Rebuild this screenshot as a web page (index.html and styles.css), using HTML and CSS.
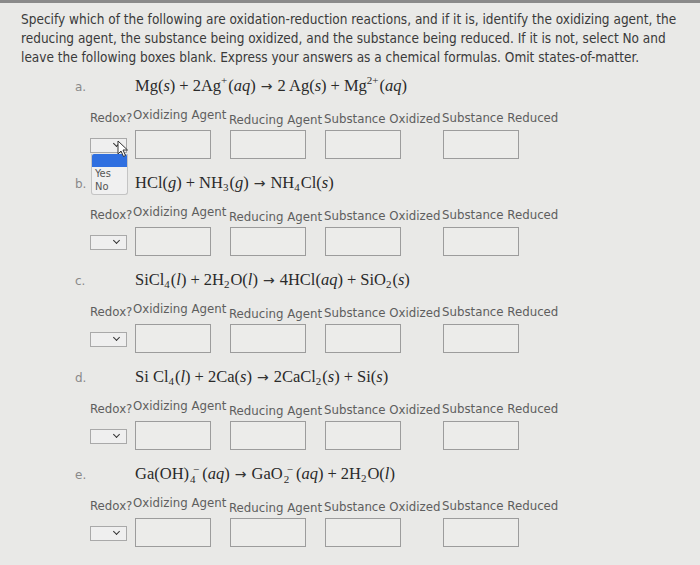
FILE: index.html
```html
<!DOCTYPE html>
<html>
<head>
<meta charset="utf-8">
<link rel="stylesheet" href="styles.css">
</head>
<body>
<div class="page">
  <p class="intro">Specify which of the following are oxidation-reduction reactions, and if it is, identify the oxidizing agent, the reducing agent, the substance being oxidized, and the substance being reduced. If it is not, select No and leave the following boxes blank. Express your answers as a chemical formulas. Omit states-of-matter.</p>

  <section class="item">
    <div class="eqrow"><span class="letter">a.</span><span class="eq">Mg(<i>s</i>)<span class="op">+</span>2Ag<sup>+</sup>(<i>aq</i>)<span class="op arr">→</span>2 Ag(<i>s</i>)<span class="op">+</span>Mg<sup>2+</sup>(<i>aq</i>)</span></div>
    <div class="grid">
      <span class="lab">Redox?</span><span class="lab up">Oxidizing Agent</span><span class="lab down">Reducing Agent</span><span class="lab sub1">Substance Oxidized</span><span class="lab">Substance Reduced</span>
      <div class="selwrap">
        <div class="sel"><span class="chev"></span></div>
        <div class="menu"><div class="hl"></div><div class="opt">Yes</div><div class="opt">No</div></div>
        <svg class="cursor" width="12" height="18" viewBox="0 0 12 18"><path d="M1 1 L1 14 L4 11 L6.5 16.5 L8.5 15.5 L6 10 L10.5 10 Z" fill="#fff" stroke="#333" stroke-width="1"/></svg>
      </div>
      <div class="box b1"></div><div class="box"></div><div class="box"></div><div class="box"></div>
    </div>
  </section>

  <section class="item">
    <div class="eqrow"><span class="letter">b.</span><span class="eq">HCl(<i>g</i>)<span class="op">+</span>NH<sub>3</sub>(<i>g</i>)<span class="op arr">→</span>NH<sub>4</sub>Cl(<i>s</i>)</span></div>
    <div class="grid">
      <span class="lab">Redox?</span><span class="lab up">Oxidizing Agent</span><span class="lab down">Reducing Agent</span><span class="lab sub1">Substance Oxidized</span><span class="lab">Substance Reduced</span>
      <div class="selwrap"><div class="sel"><span class="chev"></span></div></div>
      <div class="box b1"></div><div class="box"></div><div class="box"></div><div class="box"></div>
    </div>
  </section>

  <section class="item">
    <div class="eqrow"><span class="letter">c.</span><span class="eq">SiCl<sub>4</sub>(<i>l</i>)<span class="op">+</span>2H<sub>2</sub>O(<i>l</i>)<span class="op arr">→</span>4HCl(<i>aq</i>)<span class="op">+</span>SiO<sub>2</sub>(<i>s</i>)</span></div>
    <div class="grid">
      <span class="lab">Redox?</span><span class="lab up">Oxidizing Agent</span><span class="lab down">Reducing Agent</span><span class="lab sub1">Substance Oxidized</span><span class="lab">Substance Reduced</span>
      <div class="selwrap"><div class="sel"><span class="chev"></span></div></div>
      <div class="box b1"></div><div class="box"></div><div class="box"></div><div class="box"></div>
    </div>
  </section>

  <section class="item">
    <div class="eqrow"><span class="letter">d.</span><span class="eq">Si Cl<sub>4</sub>(<i>l</i>)<span class="op">+</span>2Ca(<i>s</i>)<span class="op arr">→</span>2CaCl<sub>2</sub>(<i>s</i>)<span class="op">+</span>Si(<i>s</i>)</span></div>
    <div class="grid">
      <span class="lab">Redox?</span><span class="lab up">Oxidizing Agent</span><span class="lab down">Reducing Agent</span><span class="lab sub1">Substance Oxidized</span><span class="lab">Substance Reduced</span>
      <div class="selwrap"><div class="sel"><span class="chev"></span></div></div>
      <div class="box b1"></div><div class="box"></div><div class="box"></div><div class="box"></div>
    </div>
  </section>

  <section class="item">
    <div class="eqrow"><span class="letter">e.</span><span class="eq">Ga(OH)<span class="ss"><span class="ssup">−</span><span class="ssub">4</span></span>(<i>aq</i>)<span class="op arr">→</span>GaO<span class="ss"><span class="ssup">−</span><span class="ssub">2</span></span>(<i>aq</i>)<span class="op">+</span>2H<sub>2</sub>O(<i>l</i>)</span></div>
    <div class="grid">
      <span class="lab">Redox?</span><span class="lab up">Oxidizing Agent</span><span class="lab down">Reducing Agent</span><span class="lab sub1">Substance Oxidized</span><span class="lab">Substance Reduced</span>
      <div class="selwrap"><div class="sel"><span class="chev"></span></div></div>
      <div class="box b1"></div><div class="box"></div><div class="box"></div><div class="box"></div>
    </div>
  </section>
</div>
</body>
</html>
```

FILE: styles.css
```css
html, body {
  margin: 0;
  padding: 0;
}
body {
  background: #e9e9e7;
  width: 700px;
  height: 565px;
  overflow: hidden;
}
.page {
  border-top: 3px solid #8a8a8a;
  padding: 7px 0 0 21px;
}
.intro {
  margin: 0;
  width: 670px;
  font-family: "DejaVu Sans Condensed", "DejaVu Sans", sans-serif;
  font-stretch: condensed;
  font-size: 13.5px;
  line-height: 19px;
  color: #3a3a3a;
}
.item {
  margin-top: 7px;
  height: 89px;
}
.item + .item {
  margin-top: 8px;
}
.eqrow {
  display: flex;
  align-items: baseline;
  height: 24px;
  padding-top: 2px;
}
.letter {
  width: 60px;
  padding-left: 54px;
  font-family: "DejaVu Sans", sans-serif;
  font-size: 12px;
  color: #8a8a8a;
}
.eq {
  font-family: "Liberation Serif", serif;
  font-size: 16.5px;
  color: #2a2a2a;
  white-space: nowrap;
}
.eq i {
  font-style: italic;
}
.eq sup, .eq sub {
  font-size: 11px;
  line-height: 0;
  padding-right: 1px;
}
.eq sup { vertical-align: 7px; }
.eq sub { vertical-align: -3px; }
.op {
  padding: 0 4px;
}
.arr {
  font-family: "DejaVu Sans", sans-serif;
  font-size: 14px;
  color: #333;
  padding: 0 5px;
}
.ss {
  display: inline-flex;
  flex-direction: column;
  vertical-align: 6px;
  font-size: 11px;
  line-height: 10px;
  padding: 0 3px 0 1px;
}
.ssup {
  padding-left: 3px;
}
.grid {
  display: grid;
  grid-template-columns: 43px 96px 95px 118px 120px;
  grid-template-rows: 18px 30px;
  row-gap: 4px;
  margin-left: 69px;
  margin-top: 8px;
}
.lab {
  font-family: "DejaVu Sans Condensed", "DejaVu Sans", sans-serif;
  font-stretch: condensed;
  font-size: 13.1px;
  color: #5e5e5e;
  white-space: nowrap;
  align-self: center;
}
.lab.up { position: relative; top: -3px; }
.lab.down { position: relative; top: 2px; }
.lab.sub1 { position: relative; top: 1px; }
.selwrap {
  position: relative;
  padding-top: 8px;
}
.sel {
  width: 35px;
  height: 13px;
  border: 1px solid #a9a9a9;
  background: #efefef;
  position: relative;
}
.chev {
  position: absolute;
  right: 7px;
  top: 2px;
  width: 4px;
  height: 4px;
  border-right: 1.6px solid #333;
  border-bottom: 1.6px solid #333;
  transform: rotate(45deg);
}
.box {
  width: 74px;
  height: 27px;
  border: 1px solid #9c9c9c;
  background: #ececea;
  margin-left: 1px;
}
.box.b1 { margin-left: 2px; }
.menu {
  position: absolute;
  left: 1px;
  top: 24px;
  width: 35px;
  height: 40px;
  background: #f0f0f0;
  border: 1px solid #c4c4c4;
  border-top: none;
  border-radius: 0 0 3px 3px;
  z-index: 5;
  font-family: "DejaVu Sans Condensed", "DejaVu Sans", sans-serif;
  font-size: 11px;
  color: #555;
}
.hl {
  height: 13px;
  background: #2f6fe0;
  border-radius: 2px 2px 0 0;
}
.opt {
  padding-left: 3px;
  line-height: 13px;
}
.cursor {
  position: absolute;
  left: 27px;
  top: 10px;
  z-index: 6;
}
```
